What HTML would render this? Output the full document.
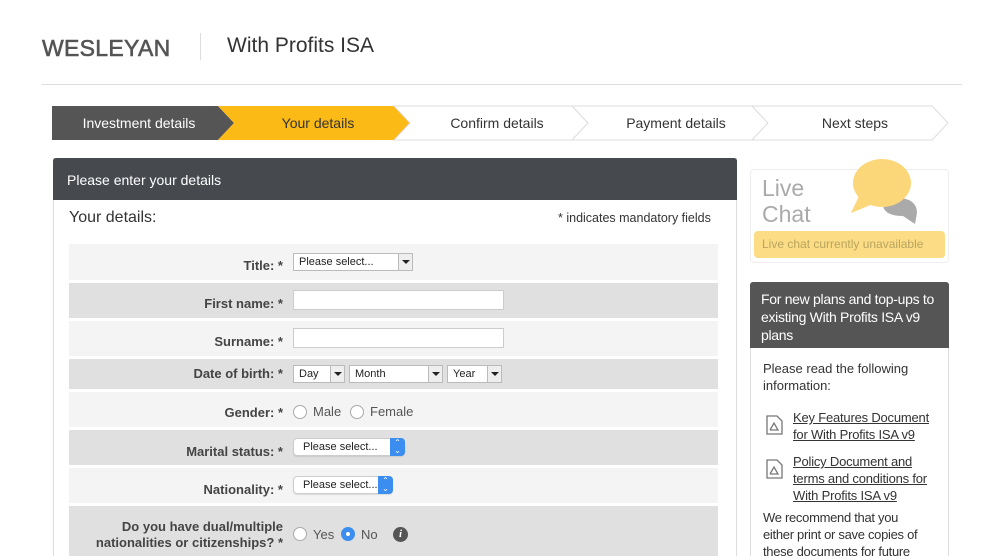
<!DOCTYPE html>
<html><head><meta charset="utf-8"><style>
*{box-sizing:border-box;margin:0;padding:0}
html,body{width:990px;height:556px;overflow:hidden}
body{background:#fff;font-family:"Liberation Sans",sans-serif;color:#333;position:relative}
.a{position:absolute}
.lbl{position:absolute;font-weight:bold;font-size:13px;color:#444;text-align:right;line-height:16px}
.row{position:absolute;left:69px;width:649px}
.l{background:#f4f4f4}.d{background:#e0e0e0}
.sel{position:absolute;background:#fff;border:1px solid #bbb;font-size:11px;height:18px;line-height:16px;padding-left:5px;color:#222}
.sel i{position:absolute;right:0;top:0;width:14px;height:16px;border-left:1px solid #bbb;background:#eee}
.sel i:after{content:"";position:absolute;left:3px;top:6px;border:4px solid transparent;border-top:4px solid #222;border-bottom:0}
.mac{position:absolute;background:#fff;border:1px solid #ccc;border-radius:4px;font-size:11px;height:18px;line-height:16px;padding-left:9px;color:#222;box-shadow:0 1px 1px rgba(0,0,0,.1)}
.mac i{position:absolute;right:-1px;top:-1px;width:15px;height:18px;background:#3b8ef0;border-radius:0 4px 4px 0;color:#fff;font-size:8px;text-align:center;line-height:8px;font-style:normal;padding-top:1px}
.inp{position:absolute;background:#fff;border:1px solid #ccc;height:20px}
.rad{position:absolute;width:14px;height:14px;border:1px solid #aaa;border-radius:50%;background:#fff}
.rt{position:absolute;font-size:13px;color:#555}
</style></head><body>
<div class="a" style="left:42px;top:35px;font-size:23px;color:#555;letter-spacing:0.3px;-webkit-text-stroke:0.6px #555">WESLEYAN</div>
<div class="a" style="left:200px;top:33px;width:1px;height:27px;background:#ddd"></div>
<div class="a" style="left:227px;top:34px;font-size:21px;color:#333">With Profits ISA</div>
<div class="a" style="left:42px;top:84px;width:920px;height:1px;background:#ddd"></div>

<svg class="a" style="left:52px;top:105px" width="900" height="36">
<polygon points="0,1 166,1 182,18 166,35 0,35" fill="#555"/>
<polygon points="166,1 342,1 358,18 342,35 166,35 182,18" fill="#fbba16"/>
<polygon points="342,1 520,1 536,18 520,35 342,35 358,18" fill="#fff" stroke="#ddd"/>
<polygon points="520,1 700,1 716,18 700,35 520,35 536,18" fill="#fff" stroke="#ddd"/>
<polygon points="700,1 880,1 896,18 880,35 700,35 716,18" fill="#fff" stroke="#ddd"/>
<g font-family="Liberation Sans" font-size="14" text-anchor="middle">
<text x="87" y="23" fill="#fff">Investment details</text>
<text x="266" y="23" fill="#333">Your details</text>
<text x="445" y="23" fill="#333">Confirm details</text>
<text x="624" y="23" fill="#333">Payment details</text>
<text x="803" y="23" fill="#333">Next steps</text></g>
</svg>

<div class="a" style="left:53px;top:158px;width:684px;height:420px;border:1px solid #ddd"></div>
<div class="a" style="left:53px;top:158px;width:684px;height:42px;background:#464a4f;border-radius:3px 3px 0 0;color:#fff;font-size:14px;padding:14px 0 0 14px">Please enter your details</div>
<div class="a" style="left:69px;top:209px;font-size:16px;color:#333">Your details:</div>
<div class="a" style="left:558px;top:211px;font-size:12.5px;color:#333">* indicates mandatory fields</div>

<div class="row l" style="top:244px;height:36px"></div>
<div class="row d" style="top:283px;height:35px"></div>
<div class="row l" style="top:321px;height:35px"></div>
<div class="row d" style="top:359px;height:30px"></div>
<div class="row l" style="top:392px;height:35px"></div>
<div class="row d" style="top:430px;height:35px"></div>
<div class="row l" style="top:468px;height:35px"></div>
<div class="row d" style="top:506px;height:60px"></div>

<div class="lbl" style="left:0;top:258px;width:283px">Title: *</div>
<div class="sel" style="left:293px;top:253px;width:120px">Please select...<i></i></div>
<div class="lbl" style="left:0;top:296px;width:283px">First name: *</div>
<div class="inp" style="left:293px;top:290px;width:211px"></div>
<div class="lbl" style="left:0;top:334px;width:283px">Surname: *</div>
<div class="inp" style="left:293px;top:328px;width:211px"></div>
<div class="lbl" style="left:0;top:366px;width:283px">Date of birth: *</div>
<div class="sel" style="left:293px;top:365px;width:52px">Day<i></i></div>
<div class="sel" style="left:349px;top:365px;width:94px">Month<i></i></div>
<div class="sel" style="left:447px;top:365px;width:55px">Year<i></i></div>
<div class="lbl" style="left:0;top:405px;width:283px">Gender: *</div>
<div class="rad" style="left:293px;top:405px"></div><div class="rt" style="left:313px;top:404px">Male</div>
<div class="rad" style="left:350px;top:405px"></div><div class="rt" style="left:370px;top:404px">Female</div>
<div class="lbl" style="left:0;top:444px;width:283px">Marital status: *</div>
<div class="mac" style="left:293px;top:438px;width:112px">Please select...<i>⌃<br>⌄</i></div>
<div class="lbl" style="left:0;top:482px;width:283px">Nationality: *</div>
<div class="mac" style="left:293px;top:476px;width:100px">Please select...<i>⌃<br>⌄</i></div>
<div class="lbl" style="left:0;top:519px;width:283px">Do you have dual/multiple<br>nationalities or citizenships? *</div>
<div class="rad" style="left:293px;top:527px"></div><div class="rt" style="left:313px;top:527px">Yes</div>
<div class="rad" style="left:341px;top:527px;background:#3b8ef0;border-color:#3b8ef0"><div style="width:4px;height:4px;background:#fff;border-radius:50%;margin:4px"></div></div><div class="rt" style="left:361px;top:527px">No</div>
<div class="a" style="left:393px;top:527px;width:15px;height:15px;border-radius:50%;background:#555;color:#fff;font-size:11px;font-weight:bold;text-align:center;line-height:15px;font-style:italic;font-family:'Liberation Serif',serif">i</div>

<div class="a" style="left:750px;top:169px;width:199px;height:94px;border:1px solid #eee;border-radius:4px"></div>
<svg class="a" style="left:845px;top:158px" width="80" height="70">
<path d="M45 40 Q72 38 72 55 L70 66 L58 58 Q40 58 38 48Z" fill="#aaa"/>
<ellipse cx="37" cy="25" rx="29" ry="24" fill="#fcd77a"/>
<path d="M14 38 L6 55 L28 46Z" fill="#fcd77a"/>
</svg>
<div class="a" style="left:762px;top:175px;font-size:23px;color:#aaa;line-height:26px">Live<br>Chat</div>
<div class="a" style="left:754px;top:231px;width:191px;height:27px;background:#fcdc84;border-radius:4px;color:#b8a560;font-size:12px;padding:6px 0 0 8px;white-space:nowrap">Live chat currently unavailable</div>

<div class="a" style="left:750px;top:282px;width:199px;height:300px;border:1px solid #ddd;border-radius:3px"></div>
<div class="a" style="left:750px;top:282px;width:199px;height:66px;background:#555;border-radius:3px 3px 0 0;color:#fff;font-size:14px;line-height:18px;padding:8px 10px 0 11px;letter-spacing:-0.3px">For new plans and top-ups to existing With Profits ISA v9 plans</div>
<div class="a" style="left:763px;top:360px;font-size:13px;line-height:17px;color:#333;width:160px">Please read the following information:</div>
<svg class="a" style="left:765px;top:414px" width="20" height="80"><g fill="none" stroke="#777" stroke-width="1.3"><path d="M2 2h10l5 5v13H2z"/><path d="M5 16l4-7 4 7h-8" /><path d="M2 46h10l5 5v13H2z"/><path d="M5 60l4-7 4 7h-8"/></g></svg>
<div class="a" style="left:793px;top:409px;font-size:13px;line-height:17px;color:#333;text-decoration:underline;width:145px;letter-spacing:-0.2px">Key Features Document for With Profits ISA v9</div>
<div class="a" style="left:793px;top:453px;font-size:13px;line-height:17px;color:#333;text-decoration:underline;width:150px;letter-spacing:-0.2px">Policy Document and terms and conditions for With Profits ISA v9</div>
<div class="a" style="left:763px;top:509px;font-size:13px;line-height:17px;color:#333;width:180px;letter-spacing:-0.3px">We recommend that you<br>either print or save copies of<br>these documents for future</div>
</body></html>
